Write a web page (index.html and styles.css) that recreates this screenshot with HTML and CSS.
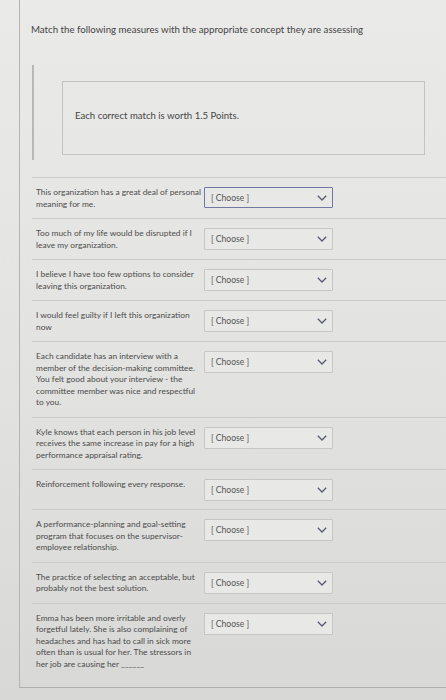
FILE: index.html
```html
<!DOCTYPE html>
<html>
<head>
<meta charset="utf-8">
<link rel="stylesheet" href="styles.css">
</head>
<body>
<div class="quiz">
  <p class="title">Match the following measures with the appropriate concept they are assessing</p>
  <div class="intro">
    <div class="note">Each correct match is worth 1.5 Points.</div>
  </div>
  <div class="answers">
    <div class="row">
      <div class="q">This organization has a great deal of personal meaning for me.</div>
      <div class="sel focus"><span>[ Choose ]</span><svg viewBox="0 0 10 6" class="chev"><path d="M0.8 0.8 L5 5 L9.2 0.8"/></svg></div>
    </div>
    <div class="row">
      <div class="q">Too much of my life would be disrupted if I leave my organization.</div>
      <div class="sel"><span>[ Choose ]</span><svg viewBox="0 0 10 6" class="chev"><path d="M0.8 0.8 L5 5 L9.2 0.8"/></svg></div>
    </div>
    <div class="row">
      <div class="q">I believe I have too few options to consider leaving this organization.</div>
      <div class="sel"><span>[ Choose ]</span><svg viewBox="0 0 10 6" class="chev"><path d="M0.8 0.8 L5 5 L9.2 0.8"/></svg></div>
    </div>
    <div class="row">
      <div class="q">I would feel guilty if I left this organization now</div>
      <div class="sel"><span>[ Choose ]</span><svg viewBox="0 0 10 6" class="chev"><path d="M0.8 0.8 L5 5 L9.2 0.8"/></svg></div>
    </div>
    <div class="row">
      <div class="q">Each candidate has an interview with a member of the decision-making committee. You felt good about your interview - the committee member was nice and respectful to you.</div>
      <div class="sel"><span>[ Choose ]</span><svg viewBox="0 0 10 6" class="chev"><path d="M0.8 0.8 L5 5 L9.2 0.8"/></svg></div>
    </div>
    <div class="row">
      <div class="q">Kyle knows that each person in his job level receives the same increase in pay for a high performance appraisal rating.</div>
      <div class="sel"><span>[ Choose ]</span><svg viewBox="0 0 10 6" class="chev"><path d="M0.8 0.8 L5 5 L9.2 0.8"/></svg></div>
    </div>
    <div class="row">
      <div class="q">Reinforcement following every response.</div>
      <div class="sel"><span>[ Choose ]</span><svg viewBox="0 0 10 6" class="chev"><path d="M0.8 0.8 L5 5 L9.2 0.8"/></svg></div>
    </div>
    <div class="row">
      <div class="q">A performance-planning and goal-setting program that focuses on the supervisor-employee relationship.</div>
      <div class="sel"><span>[ Choose ]</span><svg viewBox="0 0 10 6" class="chev"><path d="M0.8 0.8 L5 5 L9.2 0.8"/></svg></div>
    </div>
    <div class="row">
      <div class="q">The practice of selecting an acceptable, but probably not the best solution.</div>
      <div class="sel"><span>[ Choose ]</span><svg viewBox="0 0 10 6" class="chev"><path d="M0.8 0.8 L5 5 L9.2 0.8"/></svg></div>
    </div>
    <div class="row last">
      <div class="q">Emma has been more irritable and overly forgetful lately. She is also complaining of headaches and has had to call in sick more often than is usual for her. The stressors in her job are causing her ______</div>
      <div class="sel"><span>[ Choose ]</span><svg viewBox="0 0 10 6" class="chev"><path d="M0.8 0.8 L5 5 L9.2 0.8"/></svg></div>
    </div>
  </div>
</div>
</body>
</html>
```

FILE: styles.css
```css
html, body {
  margin: 0;
  padding: 0;
}
body {
  width: 446px;
  height: 700px;
  overflow: hidden;
  background: linear-gradient(to bottom, #eaeae8 0%, #e3e3e1 50%, #d8d8d6 100%);
  font-family: Lato, "Open Sans", sans-serif;
  color: #4e4e4e;
}
.quiz {
  margin-left: 19px;
  border-left: 1px solid #b4b4b2;
  border-bottom: 1px solid #b0b0ae;
  height: 688px;
  box-sizing: border-box;
}
.title {
  margin: 0;
  padding: 23px 0 0 11px;
  font-size: 9.7px;
  line-height: 12px;
  height: 42px;
  box-sizing: border-box;
  color: #444;
}
.intro {
  margin-left: 12px;
  border-left: 2px solid #b8b8b6;
  height: 95px;
  margin-top: 23px;
  padding: 16px 0 0 28px;
  box-sizing: border-box;
}
.note {
  width: 363px;
  height: 74px;
  box-sizing: border-box;
  border: 1px solid #c3c3c1;
  padding: 28px 0 0 12px;
  font-size: 9.6px;
  line-height: 12px;
  color: #454545;
}
.answers {
  margin-left: 12px;
  margin-top: 17px;
  border-top: 1px solid #cbcbc9;
}
.row {
  display: flex;
  align-items: flex-start;
  padding: 9px 0 8px 4px;
  border-bottom: 1px solid #cbcbc9;
}
.row.last {
  border-bottom: none;
}
.q {
  width: 166px;
  margin-right: 2px;
  flex: none;
  font-size: 8.4px;
  line-height: 11.5px;
  color: #4c4c4c;
}
.sel {
  width: 129px;
  height: 22px;
  box-sizing: border-box;
  border: 1px solid #c6c6c4;
  border-radius: 1px;
  background: #e8e8e6;
  display: flex;
  align-items: center;
  justify-content: space-between;
  padding: 0 5px 0 6px;
  font-size: 8.6px;
  color: #555;
}
.sel.focus {
  border: 1.5px solid #7278a0;
  height: 21px;
}
.chev {
  width: 10px;
  height: 6px;
}
.chev path {
  fill: none;
  stroke: #555a72;
  stroke-width: 1.3;
}
```
